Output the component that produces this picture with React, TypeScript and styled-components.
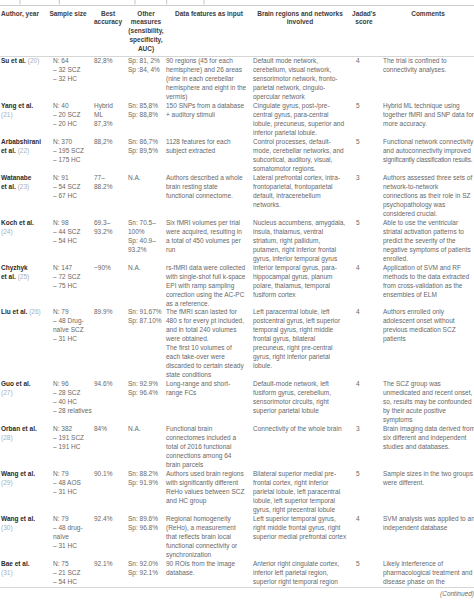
import React from "react";
import styled, { createGlobalStyle } from "styled-components";

const LH = 8.97;
const COLS = "53px 41px 34px 38px 87px 103px 27px 91px";

const Global = createGlobalStyle`
  html, body { margin: 0; padding: 0; background: #ffffff; }
  body { font-family: "Liberation Sans", Arial, Helvetica, sans-serif; }
`;

const Page = styled.div`
  width: 474px;
  height: 600px;
  overflow: hidden;
  background: #ffffff;
  font-family: "Liberation Sans", Arial, Helvetica, sans-serif;
  font-size: 6.5px;
  line-height: ${LH}px;
  color: #686868;
`;

const Ticks = styled.svg`
  display: block;
`;

const Table = styled.div`
  border-top: 1px solid #cdcdcd;
  border-bottom: 1.5px solid #d6d6d6;
`;

const HeaderRow = styled.div`
  display: grid;
  grid-template-columns: ${COLS};
  padding: 3.5px 0 2px;
  border-bottom: 1.5px solid #d6d6d6;
`;

const HeaderCell = styled.div<{ $left?: boolean; $pr: number }>`
  display: flex;
  flex-direction: column;
  align-items: ${(p) => (p.$left ? "flex-start" : "center")};
  padding-left: ${(p) => (p.$left ? 1 : 0)}px;
  padding-right: ${(p) => p.$pr}px;
  font-weight: 700;
  color: #3c3c3c;
  white-space: nowrap;
`;

const Row = styled.div`
  display: grid;
  grid-template-columns: ${COLS};
`;

const Cell = styled.div<{ $first?: boolean }>`
  display: flex;
  flex-direction: column;
  padding-left: ${(p) => (p.$first ? 1 : 0)}px;
  white-space: nowrap;
`;

const Line = styled.span<{ $tight?: boolean }>`
  display: block;
  letter-spacing: ${(p) => (p.$tight ? "-0.15px" : "normal")};
`;

const Name = styled.span`
  font-weight: 700;
  color: #2b2b2b;
`;

const Ref = styled.span`
  color: #a3b1c2;
`;

const Footer = styled.div`
  display: flex;
  justify-content: flex-end;
  padding-top: 2px;
  font-style: italic;
  color: #6a6a6a;
`;

type AuthorLine = [string, string?];

interface Study {
  author: AuthorLine[];
  sample: string[];
  best: string[];
  other: string[];
  data: string[];
  brain: string[];
  jadad: string;
  comments: string[];
  tightLast?: boolean;
}

const studies: Study[] = [
  {
    author: [["Su et al.", "(20)"]],
    sample: ["N: 64", "– 32 SCZ", "– 32 HC"],
    best: ["82,8%"],
    other: ["Sp: 81, 2%", "Sp :84, 4%"],
    data: [
      "90 regions (45 for each",
      "hemisphere) and 26 areas",
      "(nine in each cerebellar",
      "hemisphere and eight in the",
      "vermis)",
    ],
    brain: [
      "Default mode network,",
      "cerebellum, visual network,",
      "sensorimotor network, fronto-",
      "parietal network, cingulo-",
      "opercular network",
    ],
    jadad: "4",
    comments: ["The trial is confined to", "connectivity analyses."],
  },
  {
    author: [["Yang et al."], ["", "(21)"]],
    sample: ["N: 40", "– 20 SCZ", "– 20 HC"],
    best: ["Hybrid", "ML", "87,3%"],
    other: ["Sn: 85,8%", "Sp: 88,8%"],
    data: ["150 SNPs from a database", "+ auditory stimuli"],
    brain: [
      "Cingulate gyrus, post-/pre-",
      "central gyrus, para-central",
      "lobule, precuneus, superior and",
      "inferior parietal lobule.",
    ],
    jadad: "5",
    comments: [
      "Hybrid ML technique using",
      "together fMRI and SNP data for",
      "more accuracy.",
    ],
  },
  {
    author: [["Arbabshirani"], ["et al.", "(22)"]],
    sample: ["N: 370", "– 195 SCZ", "– 175 HC"],
    best: ["88,2%"],
    other: ["Sn: 86,7%", "Sp: 89,5%"],
    data: ["1128 features for each", "subject extracted"],
    brain: [
      "Control processes, default-",
      "mode, cerebellar networks, and",
      "subcortical, auditory, visual,",
      "somatomotor regions.",
    ],
    jadad: "5",
    comments: [
      "Functional network connectivity",
      "and autoconnectivity improved",
      "significantly classification results.",
    ],
    tightLast: true,
  },
  {
    author: [["Watanabe"], ["et al.", "(23)"]],
    sample: ["N: 91", "– 54 SCZ", "– 67 HC"],
    best: ["77–", "88.2%"],
    other: ["N.A."],
    data: [
      "Authors described a whole",
      "brain resting state",
      "functional connectome.",
    ],
    brain: [
      "Lateral prefrontal cortex, intra-",
      "frontoparietal, frontoparietal",
      "default, intracerebellum",
      "networks.",
    ],
    jadad: "3",
    comments: [
      "Authors assessed three sets of",
      "network-to-network",
      "connections as their role in SZ",
      "psychopathology was",
      "considered crucial.",
    ],
  },
  {
    author: [["Koch et al."], ["", "(24)"]],
    sample: ["N: 98", "– 44 SCZ", "– 54 HC"],
    best: ["69.3–", "93.2%"],
    other: ["Sn: 70.5–", "100%", "Sp: 40.9–", "93.2%"],
    data: [
      "Six fMRI volumes per trial",
      "were acquired, resulting in",
      "a total of 450 volumes per",
      "run",
    ],
    brain: [
      "Nucleus accumbens, amygdala,",
      "insula, thalamus, ventral",
      "striatum, right pallidum,",
      "putamen, right inferior frontal",
      "gyrus, inferior temporal gyrus",
    ],
    jadad: "5",
    comments: [
      "Able to use the ventricular",
      "striatal activation patterns to",
      "predict the severity of the",
      "negative symptoms of patients",
      "enrolled.",
    ],
  },
  {
    author: [["Chyzhyk"], ["et al.", "(25)"]],
    sample: ["N: 147", "– 72 SCZ", "– 75 HC"],
    best: ["~90%"],
    other: ["N.A."],
    data: [
      "rs-fMRI data were collected",
      "with single-shot full k-space",
      "EPI with ramp sampling",
      "correction using the AC-PC",
      "as a reference.",
    ],
    brain: [
      "Inferior temporal gyrus, para-",
      "hippocampal gyrus, planum",
      "polare, thalamus, temporal",
      "fusiform cortex",
    ],
    jadad: "4",
    comments: [
      "Application of SVM and RF",
      "methods to the data extracted",
      "from cross-validation as the",
      "ensembles of ELM",
    ],
  },
  {
    author: [["Liu et al.", "(26)"]],
    sample: ["N: 79", "– 48 Drug-", "naïve SCZ", "– 31 HC"],
    best: ["89.9%"],
    other: ["Sn: 91.67%", "Sp: 87.10%"],
    data: [
      "The fMRI scan lasted for",
      "480 s for every pt included,",
      "and in total 240 volumes",
      "were obtained.",
      "The first 10 volumes of",
      "each take-over were",
      "discarded to certain steady",
      "state conditions",
    ],
    brain: [
      "Left paracentral lobule, left",
      "postcentral gyrus, left superior",
      "temporal gyrus, right middle",
      "frontal gyrus, bilateral",
      "precuneus, right pre-central",
      "gyrus, right inferior parietal",
      "lobule.",
    ],
    jadad: "4",
    comments: [
      "Authors enrolled only",
      "adolescent onset without",
      "previous medication SCZ",
      "patients",
    ],
  },
  {
    author: [["Guo et al."], ["", "(27)"]],
    sample: ["N: 96", "– 28 SCZ", "– 40 HC", "– 28 relatives"],
    best: ["94.6%"],
    other: ["Sn: 92.9%", "Sp: 96.4%"],
    data: ["Long-range and short-", "range FCs"],
    brain: [
      "Default-mode network, left",
      "fusiform gyrus, cerebellum,",
      "sensorimotor circuits, right",
      "superior parietal lobule",
    ],
    jadad: "4",
    comments: [
      "The SCZ group was",
      "unmedicated and recent onset,",
      "so, results may be confounded",
      "by their acute positive",
      "symptoms",
    ],
  },
  {
    author: [["Orban et al."], ["", "(28)"]],
    sample: ["N: 382", "– 191 SCZ", "– 191 HC"],
    best: ["84%"],
    other: ["N.A."],
    data: [
      "Functional brain",
      "connectomes included a",
      "total of 2016 functional",
      "connections among 64",
      "brain parcels",
    ],
    brain: ["Connectivity of the whole brain"],
    jadad: "3",
    comments: [
      "Brain imaging data derived from",
      "six different and independent",
      "studies and databases.",
    ],
  },
  {
    author: [["Wang et al."], ["", "(29)"]],
    sample: ["N: 79", "– 48 AOS", "– 31 HC"],
    best: ["90.1%"],
    other: ["Sn: 88.2%", "Sp: 91.9%"],
    data: [
      "Authors used brain regions",
      "with significantly different",
      "ReHo values between SCZ",
      "and HC group",
    ],
    brain: [
      "Bilateral superior medial pre-",
      "frontal cortex, right inferior",
      "parietal lobule, left paracentral",
      "lobule, left superior temporal",
      "gyrus, right precentral lobule",
    ],
    jadad: "5",
    comments: ["Sample sizes in the two groups", "were different."],
  },
  {
    author: [["Wang et al."], ["", "(30)"]],
    sample: ["N: 79", "– 48 drug-", "naïve", "– 31 HC"],
    best: ["92.4%"],
    other: ["Sn: 89.6%", "Sp: 96.8%"],
    data: [
      "Regional homogeneity",
      "(ReHo), a measurement",
      "that reflects brain local",
      "functional connectivity or",
      "synchronization",
    ],
    brain: [
      "Left superior temporal gyrus,",
      "right middle frontal gyrus, right",
      "superior medial prefrontal cortex",
    ],
    jadad: "4",
    comments: ["SVM analysis was applied to an", "independent database"],
  },
  {
    author: [["Bae et al."], ["", "(31)"]],
    sample: ["N: 75", "– 21 SCZ", "– 54 HC"],
    best: ["92.1%"],
    other: ["Sn: 92.0%", "Sp: 92.1%"],
    data: ["90 ROIs from the image", "database."],
    brain: [
      "Anterior right cingulate cortex,",
      "inferior left parietal region,",
      "superior right temporal region",
    ],
    jadad: "5",
    comments: [
      "Likely interference of",
      "pharmacological treatment and",
      "disease phase on the",
    ],
  },
];

const headers: { lines: string[]; pr: number; left?: boolean }[] = [
  { lines: ["Author, year"], pr: 0, left: true },
  { lines: ["Sample size"], pr: 11 },
  { lines: ["Best", "accuracy"], pr: 6 },
  { lines: ["Other", "measures", "(sensibility,", "specificity,", "AUC)"], pr: 2 },
  { lines: ["Data features as input"], pr: 1 },
  { lines: ["Brain regions and networks", "involved"], pr: 9 },
  { lines: ["Jadad's", "score"], pr: 11 },
  { lines: ["Comments"], pr: 1 },
];

const Lines: React.FC<{ lines: string[]; tightLast?: boolean }> = ({ lines, tightLast }) => (
  <Cell>
    {lines.map((l, i) => (
      <Line key={i} $tight={tightLast && i === lines.length - 1}>
        {l}
      </Line>
    ))}
  </Cell>
);

const AuthorCell: React.FC<{ lines: AuthorLine[] }> = ({ lines }) => (
  <Cell $first>
    {lines.map(([name, ref], i) => (
      <Line key={i}>
        {name && <Name>{name}</Name>}
        {name && ref ? " " : ""}
        {ref && <Ref>{ref}</Ref>}
      </Line>
    ))}
  </Cell>
);

export default function App() {
  const ticks = [20, 59.3, 135, 166.7, 204];
  return (
    <Page>
      <Global />
      <Ticks width="474" height="5" viewBox="0 0 474 5">
        {ticks.map((x) => (
          <line key={x} x1={x} y1={0} x2={x} y2={4.5} stroke="#b9b9b9" strokeWidth={0.8} />
        ))}
      </Ticks>
      <Table>
        <HeaderRow>
          {headers.map((h, i) => (
            <HeaderCell key={i} $left={h.left} $pr={h.pr}>
              {h.lines.map((l, j) => (
                <Line key={j}>{l}</Line>
              ))}
            </HeaderCell>
          ))}
        </HeaderRow>
        {studies.map((s, i) => (
          <Row key={i}>
            <AuthorCell lines={s.author} />
            <Lines lines={s.sample} />
            <Lines lines={s.best} />
            <Lines lines={s.other} />
            <Lines lines={s.data} />
            <Lines lines={s.brain} />
            <Lines lines={[s.jadad]} />
            <Lines lines={s.comments} tightLast={s.tightLast} />
          </Row>
        ))}
      </Table>
      <Footer>(Continued)</Footer>
    </Page>
  );
}
